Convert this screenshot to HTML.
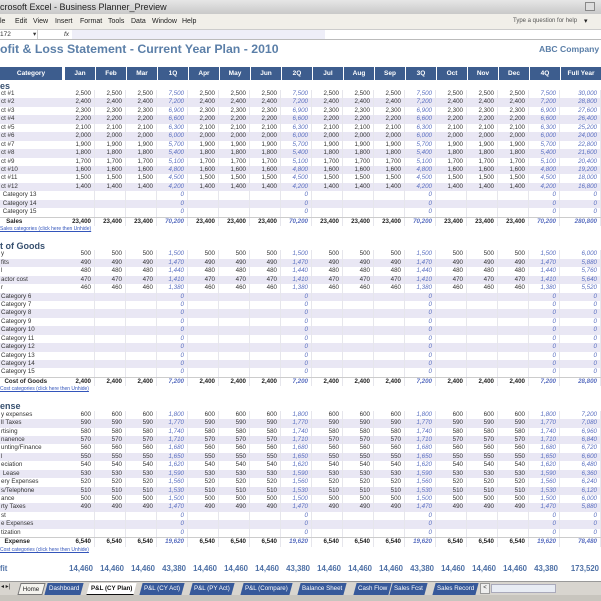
<!DOCTYPE html>
<html><head><meta charset="utf-8"><style>
*{margin:0;padding:0;box-sizing:border-box}
body{width:601px;height:601px;overflow:hidden;background:#fff;font-family:"Liberation Sans",sans-serif;position:relative;color:#333}
.tb{position:absolute;left:0;top:0;width:601px;height:14px;background:linear-gradient(#e6e6e6,#c9c9c9);font-size:9px;line-height:14px;color:#222;padding-left:0}
.mn{position:absolute;top:14px;left:0;width:601px;height:15px;background:#f1efe9;font-size:7px;line-height:15px;color:#222}
.mn span{position:absolute}
.fb{position:absolute;top:29px;left:0;width:601px;height:11px;background:#fff;border-top:1px solid #ccc;border-bottom:1px solid #bbb;font-size:6.5px;line-height:10px}
.title{position:absolute;top:42px;left:0;font-size:12.3px;font-weight:bold;color:#5b7fa8;white-space:nowrap}
.abc{position:absolute;top:44px;left:539px;font-size:8.6px;font-weight:bold;color:#5b7fa8;white-space:nowrap}
.hd{position:absolute;top:67px;left:0;height:13px;display:grid;grid-template-columns:64px repeat(16,31px) 41px}
.hd div{background:#3d5d8e;color:#fff;font-size:6.5px;font-weight:bold;text-align:center;line-height:13px;border-left:1px solid #fff}
.hd div:first-child{border-left:0;border-right:2px solid #fff}
.rows{position:absolute;top:81.6px;left:0;width:601px}
.r{height:8.45px;display:grid;grid-template-columns:64px repeat(16,31px) 41px;font-size:6.2px;line-height:8.45px;white-space:nowrap}
.r>*{border-right:1px solid #e6e6ec;text-align:right;padding-right:3px;font-style:normal;overflow:hidden}
.r>span{text-align:left;padding-left:1px;border-right:0;overflow:visible}
.r em{color:#5a6fc0;font-style:italic}
.a{background:#e9e7f4}
.t{font-weight:bold;color:#222}
.t em{font-weight:bold}
.sec{font-size:9px;font-weight:bold;color:#37506f;height:8.45px;line-height:8.45px;white-space:nowrap;border:0}
.lk{font-size:5px;color:#3355bb;text-decoration:underline;height:8.45px;line-height:8.45px;white-space:nowrap}
.pf{position:absolute;top:563px;left:0;height:11px;display:grid;grid-template-columns:64px repeat(16,31px) 41px;font-size:7.8px;font-weight:bold;color:#4f71a6;line-height:11px;white-space:nowrap}
.pf>*{text-align:right;padding-right:2px;font-style:normal}
.pf>span{text-align:left}
.tabs{position:absolute;top:581px;left:0;width:601px;height:20px;background:#d8d5cf;border-top:1px solid #999}
.tab{position:absolute;top:1px;height:12px;font-size:6.2px;line-height:12px;color:#fff;background:#37599a;padding:0 3px;white-space:nowrap;transform:skewX(-15deg)}
.tab b{display:inline-block;font-weight:normal;transform:skewX(15deg)}
.bot{position:absolute;top:595px;left:0;width:601px;height:6px;background:#c8c5be}
</style></head><body>
<div class="tb">crosoft Excel - Business Planner_Preview<div style="position:absolute;right:6px;top:2px;width:10px;height:9px;background:#ddd;border:1px solid #888"></div></div>
<div class="mn"><span style="left:0">le</span><span style="left:15px">Edit</span><span style="left:33px">View</span><span style="left:55px">Insert</span><span style="left:80px">Format</span><span style="left:108px">Tools</span><span style="left:131px">Data</span><span style="left:152px">Window</span><span style="left:182px">Help</span><span style="left:513px;color:#555;font-size:6px">Type a question for help</span><span style="left:584px">▾</span></div>
<div class="fb"><span style="position:absolute;left:0;width:38px;height:9px;border-right:1px solid #ccc">172</span><span style="position:absolute;left:33px">▾</span><span style="position:absolute;left:64px;font-style:italic">fx</span><div style="position:absolute;left:72px;top:0;width:253px;height:9px;background:#eeeef8"></div></div>
<div class="title">ofit &amp; Loss Statement - Current Year Plan - 2010</div>
<div class="abc">ABC Company</div>
<div class="hd"><div>Category</div><div>Jan</div><div>Feb</div><div>Mar</div><div>1Q</div><div>Apr</div><div>May</div><div>Jun</div><div>2Q</div><div>Jul</div><div>Aug</div><div>Sep</div><div>3Q</div><div>Oct</div><div>Nov</div><div>Dec</div><div>4Q</div><div>Full Year</div></div>
<div class="rows">
<div class="sec">es</div>
<div class="r"><span>ct #1</span><i>2,500</i><i>2,500</i><i>2,500</i><em>7,500</em><i>2,500</i><i>2,500</i><i>2,500</i><em>7,500</em><i>2,500</i><i>2,500</i><i>2,500</i><em>7,500</em><i>2,500</i><i>2,500</i><i>2,500</i><em>7,500</em><em>30,000</em></div>
<div class="r a"><span>ct #2</span><i>2,400</i><i>2,400</i><i>2,400</i><em>7,200</em><i>2,400</i><i>2,400</i><i>2,400</i><em>7,200</em><i>2,400</i><i>2,400</i><i>2,400</i><em>7,200</em><i>2,400</i><i>2,400</i><i>2,400</i><em>7,200</em><em>28,800</em></div>
<div class="r"><span>ct #3</span><i>2,300</i><i>2,300</i><i>2,300</i><em>6,900</em><i>2,300</i><i>2,300</i><i>2,300</i><em>6,900</em><i>2,300</i><i>2,300</i><i>2,300</i><em>6,900</em><i>2,300</i><i>2,300</i><i>2,300</i><em>6,900</em><em>27,600</em></div>
<div class="r a"><span>ct #4</span><i>2,200</i><i>2,200</i><i>2,200</i><em>6,600</em><i>2,200</i><i>2,200</i><i>2,200</i><em>6,600</em><i>2,200</i><i>2,200</i><i>2,200</i><em>6,600</em><i>2,200</i><i>2,200</i><i>2,200</i><em>6,600</em><em>26,400</em></div>
<div class="r"><span>ct #5</span><i>2,100</i><i>2,100</i><i>2,100</i><em>6,300</em><i>2,100</i><i>2,100</i><i>2,100</i><em>6,300</em><i>2,100</i><i>2,100</i><i>2,100</i><em>6,300</em><i>2,100</i><i>2,100</i><i>2,100</i><em>6,300</em><em>25,200</em></div>
<div class="r a"><span>ct #6</span><i>2,000</i><i>2,000</i><i>2,000</i><em>6,000</em><i>2,000</i><i>2,000</i><i>2,000</i><em>6,000</em><i>2,000</i><i>2,000</i><i>2,000</i><em>6,000</em><i>2,000</i><i>2,000</i><i>2,000</i><em>6,000</em><em>24,000</em></div>
<div class="r"><span>ct #7</span><i>1,900</i><i>1,900</i><i>1,900</i><em>5,700</em><i>1,900</i><i>1,900</i><i>1,900</i><em>5,700</em><i>1,900</i><i>1,900</i><i>1,900</i><em>5,700</em><i>1,900</i><i>1,900</i><i>1,900</i><em>5,700</em><em>22,800</em></div>
<div class="r a"><span>ct #8</span><i>1,800</i><i>1,800</i><i>1,800</i><em>5,400</em><i>1,800</i><i>1,800</i><i>1,800</i><em>5,400</em><i>1,800</i><i>1,800</i><i>1,800</i><em>5,400</em><i>1,800</i><i>1,800</i><i>1,800</i><em>5,400</em><em>21,600</em></div>
<div class="r"><span>ct #9</span><i>1,700</i><i>1,700</i><i>1,700</i><em>5,100</em><i>1,700</i><i>1,700</i><i>1,700</i><em>5,100</em><i>1,700</i><i>1,700</i><i>1,700</i><em>5,100</em><i>1,700</i><i>1,700</i><i>1,700</i><em>5,100</em><em>20,400</em></div>
<div class="r a"><span>ct #10</span><i>1,600</i><i>1,600</i><i>1,600</i><em>4,800</em><i>1,600</i><i>1,600</i><i>1,600</i><em>4,800</em><i>1,600</i><i>1,600</i><i>1,600</i><em>4,800</em><i>1,600</i><i>1,600</i><i>1,600</i><em>4,800</em><em>19,200</em></div>
<div class="r"><span>ct #11</span><i>1,500</i><i>1,500</i><i>1,500</i><em>4,500</em><i>1,500</i><i>1,500</i><i>1,500</i><em>4,500</em><i>1,500</i><i>1,500</i><i>1,500</i><em>4,500</em><i>1,500</i><i>1,500</i><i>1,500</i><em>4,500</em><em>18,000</em></div>
<div class="r a"><span>ct #12</span><i>1,400</i><i>1,400</i><i>1,400</i><em>4,200</em><i>1,400</i><i>1,400</i><i>1,400</i><em>4,200</em><i>1,400</i><i>1,400</i><i>1,400</i><em>4,200</em><i>1,400</i><i>1,400</i><i>1,400</i><em>4,200</em><em>16,800</em></div>
<div class="r"><span>&nbsp;Category 13</span><i></i><i></i><i></i><em>0</em><i></i><i></i><i></i><em>0</em><i></i><i></i><i></i><em>0</em><i></i><i></i><i></i><em>0</em><em>0</em></div>
<div class="r a"><span>&nbsp;Category 14</span><i></i><i></i><i></i><em>0</em><i></i><i></i><i></i><em>0</em><i></i><i></i><i></i><em>0</em><i></i><i></i><i></i><em>0</em><em>0</em></div>
<div class="r"><span>&nbsp;Category 15</span><i></i><i></i><i></i><em>0</em><i></i><i></i><i></i><em>0</em><i></i><i></i><i></i><em>0</em><i></i><i></i><i></i><em>0</em><em>0</em></div>
<div class="r t" style="border-top:1px solid #ccc"><span>&nbsp;&nbsp;&nbsp;Sales</span><i>23,400</i><i>23,400</i><i>23,400</i><em>70,200</em><i>23,400</i><i>23,400</i><i>23,400</i><em>70,200</em><i>23,400</i><i>23,400</i><i>23,400</i><em>70,200</em><i>23,400</i><i>23,400</i><i>23,400</i><em>70,200</em><em>280,800</em></div>
<div class="lk">Sales categories (click here then Unhide)</div>
<div class="r"></div>
<div class="sec">t of Goods</div>
<div class="r"><span>y</span><i>500</i><i>500</i><i>500</i><em>1,500</em><i>500</i><i>500</i><i>500</i><em>1,500</em><i>500</i><i>500</i><i>500</i><em>1,500</em><i>500</i><i>500</i><i>500</i><em>1,500</em><em>6,000</em></div>
<div class="r a"><span>fits</span><i>490</i><i>490</i><i>490</i><em>1,470</em><i>490</i><i>490</i><i>490</i><em>1,470</em><i>490</i><i>490</i><i>490</i><em>1,470</em><i>490</i><i>490</i><i>490</i><em>1,470</em><em>5,880</em></div>
<div class="r"><span>l</span><i>480</i><i>480</i><i>480</i><em>1,440</em><i>480</i><i>480</i><i>480</i><em>1,440</em><i>480</i><i>480</i><i>480</i><em>1,440</em><i>480</i><i>480</i><i>480</i><em>1,440</em><em>5,760</em></div>
<div class="r a"><span>actor cost</span><i>470</i><i>470</i><i>470</i><em>1,410</em><i>470</i><i>470</i><i>470</i><em>1,410</em><i>470</i><i>470</i><i>470</i><em>1,410</em><i>470</i><i>470</i><i>470</i><em>1,410</em><em>5,640</em></div>
<div class="r"><span>r</span><i>460</i><i>460</i><i>460</i><em>1,380</em><i>460</i><i>460</i><i>460</i><em>1,380</em><i>460</i><i>460</i><i>460</i><em>1,380</em><i>460</i><i>460</i><i>460</i><em>1,380</em><em>5,520</em></div>
<div class="r a"><span>Category 6</span><i></i><i></i><i></i><em>0</em><i></i><i></i><i></i><em>0</em><i></i><i></i><i></i><em>0</em><i></i><i></i><i></i><em>0</em><em>0</em></div>
<div class="r"><span>Category 7</span><i></i><i></i><i></i><em>0</em><i></i><i></i><i></i><em>0</em><i></i><i></i><i></i><em>0</em><i></i><i></i><i></i><em>0</em><em>0</em></div>
<div class="r a"><span>Category 8</span><i></i><i></i><i></i><em>0</em><i></i><i></i><i></i><em>0</em><i></i><i></i><i></i><em>0</em><i></i><i></i><i></i><em>0</em><em>0</em></div>
<div class="r"><span>Category 9</span><i></i><i></i><i></i><em>0</em><i></i><i></i><i></i><em>0</em><i></i><i></i><i></i><em>0</em><i></i><i></i><i></i><em>0</em><em>0</em></div>
<div class="r a"><span>Category 10</span><i></i><i></i><i></i><em>0</em><i></i><i></i><i></i><em>0</em><i></i><i></i><i></i><em>0</em><i></i><i></i><i></i><em>0</em><em>0</em></div>
<div class="r"><span>Category 11</span><i></i><i></i><i></i><em>0</em><i></i><i></i><i></i><em>0</em><i></i><i></i><i></i><em>0</em><i></i><i></i><i></i><em>0</em><em>0</em></div>
<div class="r a"><span>Category 12</span><i></i><i></i><i></i><em>0</em><i></i><i></i><i></i><em>0</em><i></i><i></i><i></i><em>0</em><i></i><i></i><i></i><em>0</em><em>0</em></div>
<div class="r"><span>Category 13</span><i></i><i></i><i></i><em>0</em><i></i><i></i><i></i><em>0</em><i></i><i></i><i></i><em>0</em><i></i><i></i><i></i><em>0</em><em>0</em></div>
<div class="r a"><span>Category 14</span><i></i><i></i><i></i><em>0</em><i></i><i></i><i></i><em>0</em><i></i><i></i><i></i><em>0</em><i></i><i></i><i></i><em>0</em><em>0</em></div>
<div class="r"><span>Category 15</span><i></i><i></i><i></i><em>0</em><i></i><i></i><i></i><em>0</em><i></i><i></i><i></i><em>0</em><i></i><i></i><i></i><em>0</em><em>0</em></div>
<div class="r t" style="border-top:1px solid #ccc"><span>&nbsp;&nbsp;Cost of Goods</span><i>2,400</i><i>2,400</i><i>2,400</i><em>7,200</em><i>2,400</i><i>2,400</i><i>2,400</i><em>7,200</em><i>2,400</i><i>2,400</i><i>2,400</i><em>7,200</em><i>2,400</i><i>2,400</i><i>2,400</i><em>7,200</em><em>28,800</em></div>
<div class="lk">Cost categories (click here then Unhide)</div>
<div class="r"></div>
<div class="sec">ense</div>
<div class="r"><span>y expenses</span><i>600</i><i>600</i><i>600</i><em>1,800</em><i>600</i><i>600</i><i>600</i><em>1,800</em><i>600</i><i>600</i><i>600</i><em>1,800</em><i>600</i><i>600</i><i>600</i><em>1,800</em><em>7,200</em></div>
<div class="r a"><span>ll Taxes</span><i>590</i><i>590</i><i>590</i><em>1,770</em><i>590</i><i>590</i><i>590</i><em>1,770</em><i>590</i><i>590</i><i>590</i><em>1,770</em><i>590</i><i>590</i><i>590</i><em>1,770</em><em>7,080</em></div>
<div class="r"><span>rtising</span><i>580</i><i>580</i><i>580</i><em>1,740</em><i>580</i><i>580</i><i>580</i><em>1,740</em><i>580</i><i>580</i><i>580</i><em>1,740</em><i>580</i><i>580</i><i>580</i><em>1,740</em><em>6,960</em></div>
<div class="r a"><span>nanence</span><i>570</i><i>570</i><i>570</i><em>1,710</em><i>570</i><i>570</i><i>570</i><em>1,710</em><i>570</i><i>570</i><i>570</i><em>1,710</em><i>570</i><i>570</i><i>570</i><em>1,710</em><em>6,840</em></div>
<div class="r"><span>unting/Finance</span><i>560</i><i>560</i><i>560</i><em>1,680</em><i>560</i><i>560</i><i>560</i><em>1,680</em><i>560</i><i>560</i><i>560</i><em>1,680</em><i>560</i><i>560</i><i>560</i><em>1,680</em><em>6,720</em></div>
<div class="r a"><span>l</span><i>550</i><i>550</i><i>550</i><em>1,650</em><i>550</i><i>550</i><i>550</i><em>1,650</em><i>550</i><i>550</i><i>550</i><em>1,650</em><i>550</i><i>550</i><i>550</i><em>1,650</em><em>6,600</em></div>
<div class="r"><span>eciation</span><i>540</i><i>540</i><i>540</i><em>1,620</em><i>540</i><i>540</i><i>540</i><em>1,620</em><i>540</i><i>540</i><i>540</i><em>1,620</em><i>540</i><i>540</i><i>540</i><em>1,620</em><em>6,480</em></div>
<div class="r a"><span>&nbsp;Lease</span><i>530</i><i>530</i><i>530</i><em>1,590</em><i>530</i><i>530</i><i>530</i><em>1,590</em><i>530</i><i>530</i><i>530</i><em>1,590</em><i>530</i><i>530</i><i>530</i><em>1,590</em><em>6,360</em></div>
<div class="r"><span>ery Expenses</span><i>520</i><i>520</i><i>520</i><em>1,560</em><i>520</i><i>520</i><i>520</i><em>1,560</em><i>520</i><i>520</i><i>520</i><em>1,560</em><i>520</i><i>520</i><i>520</i><em>1,560</em><em>6,240</em></div>
<div class="r a"><span>s/Telephone</span><i>510</i><i>510</i><i>510</i><em>1,530</em><i>510</i><i>510</i><i>510</i><em>1,530</em><i>510</i><i>510</i><i>510</i><em>1,530</em><i>510</i><i>510</i><i>510</i><em>1,530</em><em>6,120</em></div>
<div class="r"><span>ance</span><i>500</i><i>500</i><i>500</i><em>1,500</em><i>500</i><i>500</i><i>500</i><em>1,500</em><i>500</i><i>500</i><i>500</i><em>1,500</em><i>500</i><i>500</i><i>500</i><em>1,500</em><em>6,000</em></div>
<div class="r a"><span>rty Taxes</span><i>490</i><i>490</i><i>490</i><em>1,470</em><i>490</i><i>490</i><i>490</i><em>1,470</em><i>490</i><i>490</i><i>490</i><em>1,470</em><i>490</i><i>490</i><i>490</i><em>1,470</em><em>5,880</em></div>
<div class="r"><span>st</span><i></i><i></i><i></i><em>0</em><i></i><i></i><i></i><em>0</em><i></i><i></i><i></i><em>0</em><i></i><i></i><i></i><em>0</em><em>0</em></div>
<div class="r a"><span>e Expenses</span><i></i><i></i><i></i><em>0</em><i></i><i></i><i></i><em>0</em><i></i><i></i><i></i><em>0</em><i></i><i></i><i></i><em>0</em><em>0</em></div>
<div class="r"><span>tization</span><i></i><i></i><i></i><em>0</em><i></i><i></i><i></i><em>0</em><i></i><i></i><i></i><em>0</em><i></i><i></i><i></i><em>0</em><em>0</em></div>
<div class="r t" style="border-top:1px solid #ccc"><span>&nbsp;&nbsp;Expense</span><i>6,540</i><i>6,540</i><i>6,540</i><em>19,620</em><i>6,540</i><i>6,540</i><i>6,540</i><em>19,620</em><i>6,540</i><i>6,540</i><i>6,540</i><em>19,620</em><i>6,540</i><i>6,540</i><i>6,540</i><em>19,620</em><em>78,480</em></div>
<div class="lk">Cost categories (click here then Unhide)</div>
</div>
<div class="pf"><span>fit</span><i>14,460</i><i>14,460</i><i>14,460</i><i>43,380</i><i>14,460</i><i>14,460</i><i>14,460</i><i>43,380</i><i>14,460</i><i>14,460</i><i>14,460</i><i>43,380</i><i>14,460</i><i>14,460</i><i>14,460</i><i>43,380</i><i>173,520</i></div>
<div class="tabs">
<span style="position:absolute;left:1px;top:1px;font-size:6px;color:#222">◂ ▸|</span>
<div class="tab" style="left:19px;background:#f4f3ee;color:#222;border:1px solid #777"><b>Home</b></div>
<div class="tab" style="left:46px"><b>Dashboard</b></div>
<div class="tab" style="left:88px;background:#fff;color:#111;border-bottom:1px solid #111"><b style="font-weight:bold">P&amp;L (CY Plan)</b></div>
<div class="tab" style="left:141px"><b>P&amp;L (CY Act)</b></div>
<div class="tab" style="left:191px"><b>P&amp;L (PY Act)</b></div>
<div class="tab" style="left:242px"><b>P&amp;L (Compare)</b></div>
<div class="tab" style="left:299px"><b>Balance Sheet</b></div>
<div class="tab" style="left:355px"><b>Cash Flow</b></div>
<div class="tab" style="left:391px"><b>Sales Fcst</b></div>
<div class="tab" style="left:434px"><b>Sales Record</b></div>
<div style="position:absolute;left:480px;top:1px;width:10px;height:11px;background:#eee;border:1px solid #999;font-size:6px;text-align:center;line-height:9px">&lt;</div>
<div style="position:absolute;left:491px;top:2px;width:65px;height:9px;background:#e8ecf4;border:1px solid #aab"></div>
</div>
<div class="bot"></div>
</body></html>
